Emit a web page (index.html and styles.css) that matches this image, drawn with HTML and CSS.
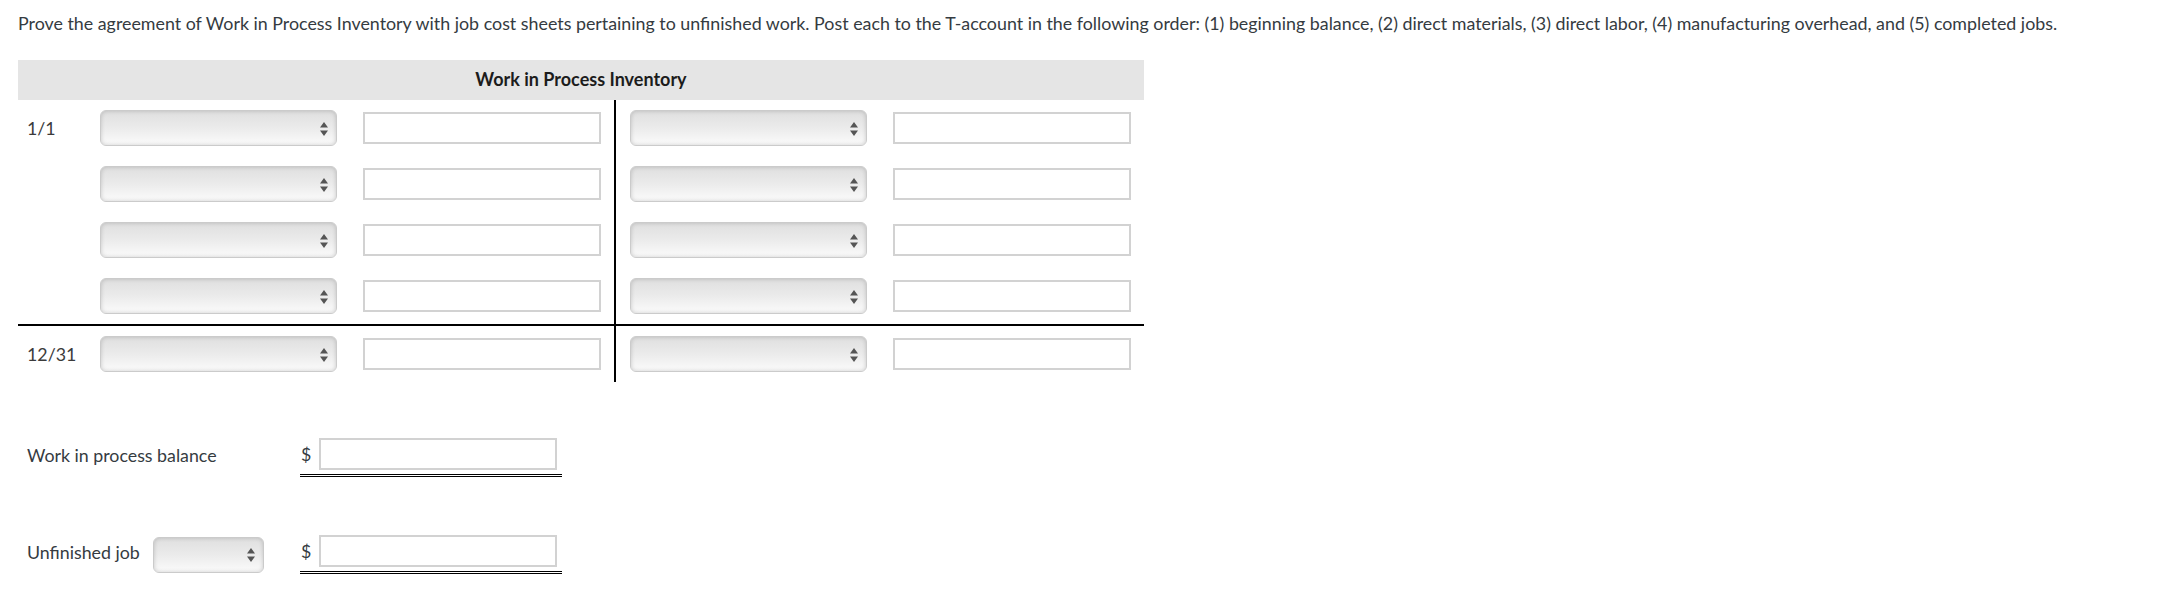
FILE: index.html
```html
<!DOCTYPE html>
<html lang="en">
<head>
<meta charset="utf-8">
<title>Work in Process Inventory</title>
<link rel="stylesheet" href="styles.css">
</head>
<body>
<div class="page">
  <p class="prompt">Prove the agreement of Work in Process Inventory with job cost sheets pertaining to unfinished work. Post each to the T-account in the following order: (1) beginning balance, (2) direct materials, (3) direct labor, (4) manufacturing overhead, and (5) completed jobs.</p>

  <div class="taccount">
    <div class="t-head">Work in Process Inventory</div>
    <div class="t-body">
      <div class="t-side t-left">
        <div class="t-row"><span class="t-label">1/1</span><div class="select wide"><svg class="arrows" viewBox="0 0 8 14" width="8" height="14"><path d="M4 0 L8 5.5 L0 5.5 Z M0 8.5 L8 8.5 L4 14 Z"/></svg></div><input class="amount" type="text"></div>
        <div class="t-row"><span class="t-label"></span><div class="select wide"><svg class="arrows" viewBox="0 0 8 14" width="8" height="14"><path d="M4 0 L8 5.5 L0 5.5 Z M0 8.5 L8 8.5 L4 14 Z"/></svg></div><input class="amount" type="text"></div>
        <div class="t-row"><span class="t-label"></span><div class="select wide"><svg class="arrows" viewBox="0 0 8 14" width="8" height="14"><path d="M4 0 L8 5.5 L0 5.5 Z M0 8.5 L8 8.5 L4 14 Z"/></svg></div><input class="amount" type="text"></div>
        <div class="t-row ruled"><span class="t-label"></span><div class="select wide"><svg class="arrows" viewBox="0 0 8 14" width="8" height="14"><path d="M4 0 L8 5.5 L0 5.5 Z M0 8.5 L8 8.5 L4 14 Z"/></svg></div><input class="amount" type="text"></div>
        <div class="t-row"><span class="t-label">12/31</span><div class="select wide"><svg class="arrows" viewBox="0 0 8 14" width="8" height="14"><path d="M4 0 L8 5.5 L0 5.5 Z M0 8.5 L8 8.5 L4 14 Z"/></svg></div><input class="amount" type="text"></div>
      </div>
      <div class="t-side t-right">
        <div class="t-row"><div class="select wide"><svg class="arrows" viewBox="0 0 8 14" width="8" height="14"><path d="M4 0 L8 5.5 L0 5.5 Z M0 8.5 L8 8.5 L4 14 Z"/></svg></div><input class="amount" type="text"></div>
        <div class="t-row"><div class="select wide"><svg class="arrows" viewBox="0 0 8 14" width="8" height="14"><path d="M4 0 L8 5.5 L0 5.5 Z M0 8.5 L8 8.5 L4 14 Z"/></svg></div><input class="amount" type="text"></div>
        <div class="t-row"><div class="select wide"><svg class="arrows" viewBox="0 0 8 14" width="8" height="14"><path d="M4 0 L8 5.5 L0 5.5 Z M0 8.5 L8 8.5 L4 14 Z"/></svg></div><input class="amount" type="text"></div>
        <div class="t-row ruled"><div class="select wide"><svg class="arrows" viewBox="0 0 8 14" width="8" height="14"><path d="M4 0 L8 5.5 L0 5.5 Z M0 8.5 L8 8.5 L4 14 Z"/></svg></div><input class="amount" type="text"></div>
        <div class="t-row"><div class="select wide"><svg class="arrows" viewBox="0 0 8 14" width="8" height="14"><path d="M4 0 L8 5.5 L0 5.5 Z M0 8.5 L8 8.5 L4 14 Z"/></svg></div><input class="amount" type="text"></div>
      </div>
    </div>
  </div>

  <div class="summary">
    <div class="s-row">
      <div class="s-label"><span class="s-text">Work in process balance</span></div>
      <div class="s-cell"><span class="dollar">$</span><input class="amount" type="text"></div>
    </div>
    <div class="s-row second">
      <div class="s-label"><span class="s-text">Unfinished job</span><div class="select narrow"><svg class="arrows" viewBox="0 0 8 14" width="8" height="14"><path d="M4 0 L8 5.5 L0 5.5 Z M0 8.5 L8 8.5 L4 14 Z"/></svg></div></div>
      <div class="s-cell"><span class="dollar">$</span><input class="amount" type="text"></div>
    </div>
  </div>
</div>
</body>
</html>
```

FILE: styles.css
```css
* { box-sizing: border-box; }

html, body {
  margin: 0;
  padding: 0;
  background: #ffffff;
}

body {
  font-family: Lato, "Liberation Sans", sans-serif;
  font-size: 17.8px;
  color: #353b41;
}

.page {
  padding: 12px 0 0 18px;
}

.prompt {
  margin: 0 0 26px;
  font-size: 17.84px;
  line-height: 22px;
  white-space: nowrap;
}

.taccount {
  width: 1126px;
}

.t-head {
  height: 40px;
  line-height: 38px;
  padding-bottom: 2px;
  background: #e5e5e5;
  text-align: center;
  font-size: 18px;
  font-weight: 700;
  color: #1c1c1c;
}

.t-body {
  display: flex;
}

.t-side {
  display: flex;
  flex-direction: column;
}

.t-left {
  width: 598px;
  border-right: 2px solid #000;
}

.t-right {
  width: 528px;
}

.t-row {
  height: 56px;
  display: flex;
  align-items: center;
  box-sizing: content-box;
}

.t-right .t-row {
  padding-left: 14px;
}

.t-row.ruled {
  border-bottom: 2px solid #000;
}

.t-row .select { margin-right: 26px; }

.t-label {
  width: 82px;
  padding-left: 9px;
  padding-bottom: 1px;
  color: #3b3b3b;
}

.select {
  height: 36px;
  border: 1px solid #cbcbcb;
  border-radius: 6px;
  background: linear-gradient(#dfdfdf 0%, #ebebeb 50%, #fbfbfb 100%);
  box-shadow: inset 0 0 4px rgba(0, 0, 0, 0.18);
  display: flex;
  align-items: center;
  justify-content: flex-end;
  padding-right: 8px;
  flex: none;
}

.select.wide { width: 237px; }
.select.narrow { width: 111px; }

.arrows {
  display: block;
  fill: #555555;
  margin-top: 1px;
}

.amount {
  width: 238px;
  height: 32px;
  border: 2px solid #d2d2d2;
  border-radius: 0;
  background: #fff;
  margin: 0;
  padding: 0 4px;
  font: inherit;
  flex: none;
}

.summary {
  margin-top: 56px;
  display: flex;
  flex-direction: column;
  gap: 58px;
}

.s-row {
  display: flex;
  align-items: center;
}

.s-label {
  width: 282px;
  padding-left: 9px;
  display: flex;
  align-items: center;
  gap: 13px;
}

.s-text {
  margin-bottom: 6px;
}

.s-cell {
  width: 262px;
  display: flex;
  align-items: center;
  padding: 0 5px 4px 0;
  border-bottom: 3px double #000;
}

.dollar {
  width: 19px;
  padding-left: 1px;
}
```
